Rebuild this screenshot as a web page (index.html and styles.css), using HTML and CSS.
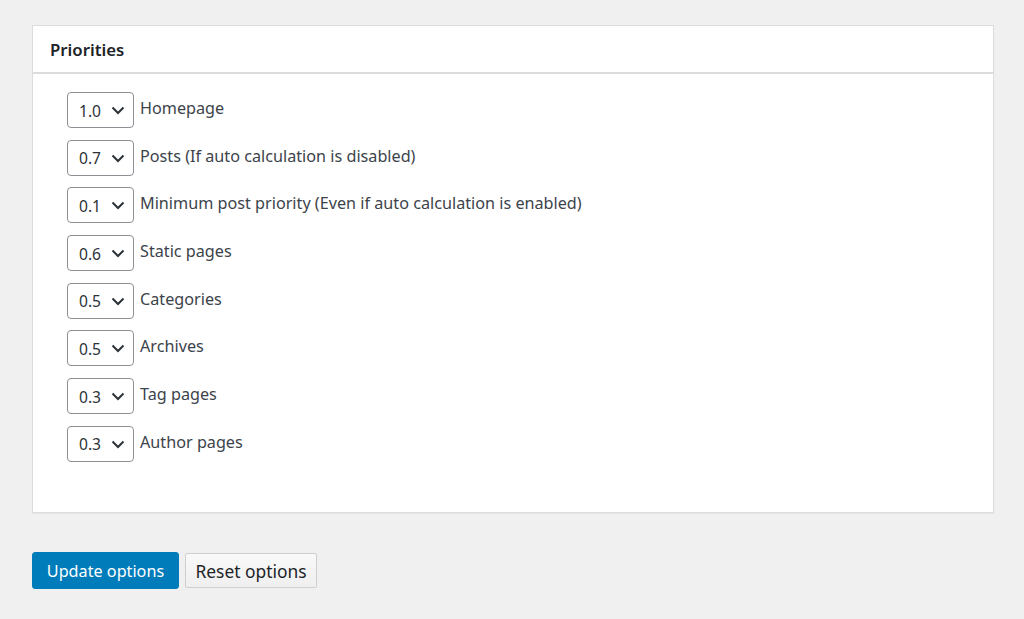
FILE: index.html
```html
<!DOCTYPE html>
<html>
<head>
<meta charset="utf-8">
<link rel="stylesheet" href="styles.css">
</head>
<body>
<div class="wrap">
  <div class="postbox">
    <h2 class="hndle">Priorities</h2>
    <div class="inside">
      <ul class="prio-list">
        <li class="prio-row"><span class="select">1.0<svg class="chev" viewBox="0 0 14 9"><path d="M1.5 1.5 L7 7 L12.5 1.5" /></svg></span><span class="label">Homepage</span></li>
        <li class="prio-row"><span class="select">0.7<svg class="chev" viewBox="0 0 14 9"><path d="M1.5 1.5 L7 7 L12.5 1.5" /></svg></span><span class="label">Posts (If auto calculation is disabled)</span></li>
        <li class="prio-row"><span class="select">0.1<svg class="chev" viewBox="0 0 14 9"><path d="M1.5 1.5 L7 7 L12.5 1.5" /></svg></span><span class="label">Minimum post priority (Even if auto calculation is enabled)</span></li>
        <li class="prio-row"><span class="select">0.6<svg class="chev" viewBox="0 0 14 9"><path d="M1.5 1.5 L7 7 L12.5 1.5" /></svg></span><span class="label">Static pages</span></li>
        <li class="prio-row"><span class="select">0.5<svg class="chev" viewBox="0 0 14 9"><path d="M1.5 1.5 L7 7 L12.5 1.5" /></svg></span><span class="label">Categories</span></li>
        <li class="prio-row"><span class="select">0.5<svg class="chev" viewBox="0 0 14 9"><path d="M1.5 1.5 L7 7 L12.5 1.5" /></svg></span><span class="label">Archives</span></li>
        <li class="prio-row"><span class="select">0.3<svg class="chev" viewBox="0 0 14 9"><path d="M1.5 1.5 L7 7 L12.5 1.5" /></svg></span><span class="label">Tag pages</span></li>
        <li class="prio-row"><span class="select">0.3<svg class="chev" viewBox="0 0 14 9"><path d="M1.5 1.5 L7 7 L12.5 1.5" /></svg></span><span class="label">Author pages</span></li>
      </ul>
    </div>
  </div>
  <div class="actions">
    <button class="btn btn-primary">Update options</button>
    <button class="btn btn-secondary">Reset options</button>
  </div>
</div>
</body>
</html>
```

FILE: styles.css
```css
html, body {
  margin: 0;
  padding: 0;
  background: #f0f0f1;
  font-family: "Noto Sans", "Open Sans", sans-serif;
  color: #3c434a;
}
.wrap {
  padding: 25px 30px 0 32px;
}
.postbox {
  background: #fff;
  border: 1px solid #dcdcde;
  box-shadow: 0 1px 1px rgba(0,0,0,0.04);
}
.hndle {
  margin: 0;
  height: 46px;
  display: flex;
  align-items: center;
  padding: 0 17px;
  font-size: 16.8px;
  font-weight: 600;
  color: #1d2327;
  border-bottom: 2px solid #dcdcde;
}
.inside {
  padding: 18px 34px 50px;
}
.prio-list {
  list-style: none;
  margin: 0;
  padding: 0;
  display: flex;
  flex-direction: column;
  gap: 11.7px;
}
.prio-row {
  display: flex;
  align-items: flex-start;
  gap: 6px;
  height: 36px;
}
.select {
  box-sizing: border-box;
  width: 67px;
  height: 36px;
  border: 1px solid #8c8f94;
  border-radius: 4px;
  display: flex;
  align-items: center;
  padding: 1px 0 0 11px;
  font-size: 15.6px;
  color: #2c3338;
}
.chev {
  width: 14px;
  height: 9px;
  margin-left: 10px;
  fill: none;
  stroke: #2c3338;
  stroke-width: 2;
}
.label {
  font-size: 16.2px;
  line-height: 32px;
  color: #3c434a;
}
.actions {
  display: flex;
  align-items: center;
  gap: 6px;
  margin-top: 39px;
}
.btn {
  font-family: "Noto Sans", "Open Sans", sans-serif;
  font-size: 16.2px;
  border-radius: 3px;
  cursor: pointer;
  padding: 1px 0 0;
}
.btn-primary {
  background: #007cba;
  color: #fff;
  border: 1px solid #007cba;
  height: 37px;
  width: 147px;
}
.btn-secondary {
  background: linear-gradient(#f9f9f9, #efefef);
  color: #1d2327;
  border: 1px solid #cfcfcf;
  border-radius: 2px;
  height: 35px;
  width: 132px;
  font-size: 17.4px;
}
```
